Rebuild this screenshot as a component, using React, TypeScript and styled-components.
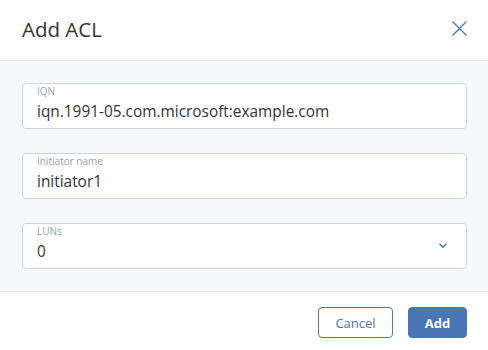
import React from "react";
import styled, { createGlobalStyle } from "styled-components";

const Global = createGlobalStyle`
  html, body { margin: 0; padding: 0; background: #ffffff; }
  body { font-family: "Open Sans", "Noto Sans", sans-serif; color: #333; }
  * { box-sizing: border-box; }
`;

const Dialog = styled.div`
  width: 488px;
  height: 350px;
  display: flex;
  flex-direction: column;
  background: #fff;
`;

const Header = styled.div`
  height: 61px;
  display: flex;
  align-items: center;
  justify-content: space-between;
  padding: 0 21px 0 22px;
  border-bottom: 1px solid #e4e8ee;
`;

const Title = styled.h1`
  margin: 0;
  font-size: 20.5px;
  line-height: 27px;
  font-weight: 400;
  color: #333;
  padding-bottom: 2px;
`;

const CloseButton = styled.button`
  border: 0;
  background: transparent;
  padding: 0;
  width: 15px;
  height: 15px;
  display: flex;
  cursor: pointer;
  margin-bottom: 3px;
`;

const Body = styled.div`
  background: #f6f8fb;
  padding: 22px 21px 22px 22px;
  display: flex;
  flex-direction: column;
  gap: 24px;
  border-bottom: 1px solid #e4e8ee;
`;

const Field = styled.div`
  position: relative;
  height: 46px;
  border: 1px solid #cdd5e0;
  border-radius: 4px;
  background: #fff;
  padding: 0 36px 2px 14px;
  display: flex;
  flex-direction: column;
`;

const Label = styled.span`
  font-size: 10px;
  line-height: 14px;
  color: #9aa0a8;
`;

const Value = styled.span`
  font-size: 15.4px;
  line-height: 28px;
  color: #333;
  white-space: nowrap;
`;

const Chevron = styled.svg`
  position: absolute;
  right: 19px;
  top: 19px;
`;

const Footer = styled.div`
  flex: 1;
  display: flex;
  justify-content: flex-end;
  align-items: flex-start;
  gap: 15px;
  padding: 15px 21px 0 0;
`;

const Button = styled.button<{ $primary?: boolean }>`
  height: 31px;
  padding: 0;
  width: ${(p) => (p.$primary ? "59px" : "75px")};
  border-radius: 4px;
  font-family: "Open Sans", "Noto Sans", sans-serif;
  font-size: 13px;
  font-weight: ${(p) => (p.$primary ? 700 : 400)};
  border: 1px solid #4a76b6;
  background: ${(p) => (p.$primary ? "#4a76b6" : "#fff")};
  color: ${(p) => (p.$primary ? "#fff" : "#4a76b6")};
  cursor: pointer;
`;

export default function App() {
  return (
    <>
      <Global />
      <Dialog>
        <Header>
          <Title>Add ACL</Title>
          <CloseButton aria-label="Close">
            <svg width="15" height="15" viewBox="0 0 15 15">
              <path d="M1 1 L14 14 M14 1 L1 14" stroke="#4a76b6" strokeWidth="1.4" strokeLinecap="round" />
            </svg>
          </CloseButton>
        </Header>
        <Body>
          <Field>
            <Label>IQN</Label>
            <Value>iqn.1991-05.com.microsoft:example.com</Value>
          </Field>
          <Field>
            <Label>Initiator name</Label>
            <Value>initiator1</Value>
          </Field>
          <Field>
            <Label>LUNs</Label>
            <Value>0</Value>
            <Chevron width="8" height="6" viewBox="0 0 8 6">
              <path d="M1 1.3 L4 4.3 L7 1.3" fill="none" stroke="#4a76b6" strokeWidth="1.6" strokeLinecap="round" strokeLinejoin="round" />
            </Chevron>
          </Field>
        </Body>
        <Footer>
          <Button>Cancel</Button>
          <Button $primary>Add</Button>
        </Footer>
      </Dialog>
    </>
  );
}
